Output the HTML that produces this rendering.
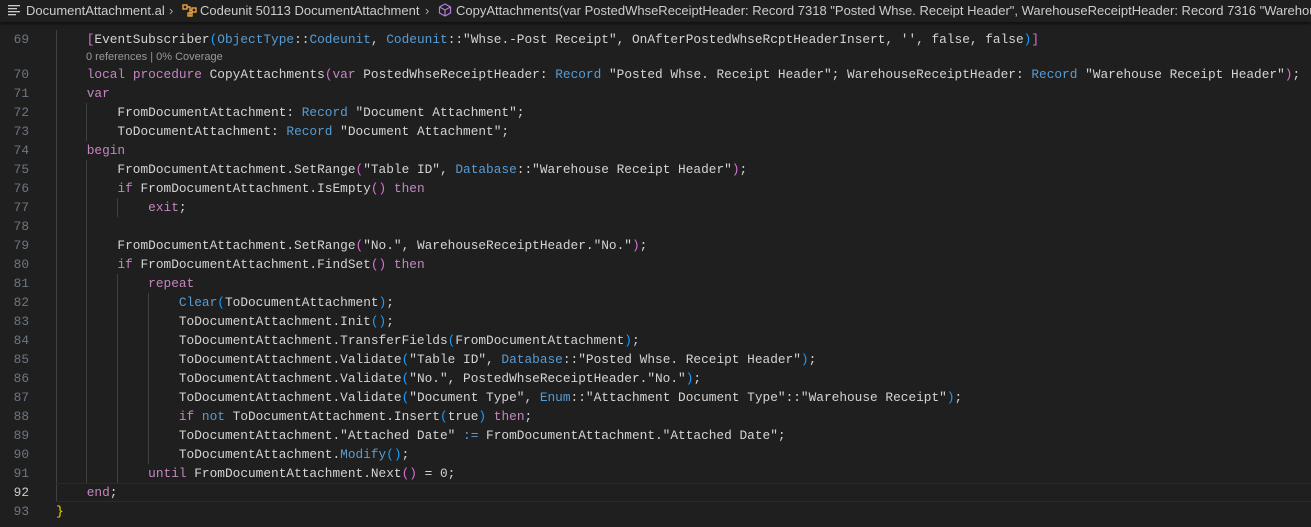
<!DOCTYPE html>
<html><head><meta charset="utf-8"><style>
html,body{margin:0;padding:0;background:#1f1f1f;width:1311px;height:527px;overflow:hidden;position:relative}
.bc{position:absolute;left:0;top:0;width:1311px;height:22px;background:#1f1f1f;font-family:"Liberation Sans",sans-serif;font-size:13px;color:#cccccc;white-space:nowrap;line-height:22px;box-shadow:0 2px 3px #0008;z-index:5;overflow:hidden}
.bc span{position:absolute;top:0}
.ln{position:absolute;left:0;width:29px;text-align:right;font-family:"Liberation Mono",monospace;font-size:12.8px;color:#6e7681;line-height:19px}
.cd{position:absolute;left:56px;font-family:"Liberation Mono",monospace;font-size:12.8px;color:#d4d4d4;white-space:pre;line-height:19px}
.k{color:#c586c0}.b{color:#569cd6}.p{color:#179fff}.g{color:#ffd700}.m{color:#da70d6}
.gd{position:absolute;width:1px;background:#404040}
.lens{position:absolute;left:86px;top:49px;font-family:"Liberation Sans",sans-serif;font-size:11px;color:#999;line-height:17px}
</style></head><body>
<div class="bc">
<span style="left:8px;top:0;color:#ccc">
<svg width="13" height="12" style="vertical-align:-1px"><g fill="#ccc"><rect x="0" y="1" width="12" height="1.3"/><rect x="0" y="4" width="9" height="1.3"/><rect x="0" y="7" width="12" height="1.3"/><rect x="0" y="10" width="8" height="1.3"/></g></svg></span>
<span style="left:26px">DocumentAttachment.al</span>
<span style="left:169px;color:#aaa">›</span>
<span style="left:182px;top:0"><svg width="16" height="14" style="vertical-align:-2px"><g stroke="#e8a33d" fill="none" stroke-width="1.4"><rect x="1" y="2" width="4" height="4"/><rect x="10" y="5" width="4" height="4"/><rect x="6" y="10" width="4" height="3"/><path d="M5 4h3v9M8 7h2"/></g></svg></span>
<span style="left:200px">Codeunit 50113 DocumentAttachment</span>
<span style="left:425px;color:#aaa">›</span>
<span style="left:438px;top:0"><svg width="14" height="14" style="vertical-align:-2px"><g stroke="#b180d7" fill="none" stroke-width="1.2"><path d="M7 1l5.5 3v6L7 13 1.5 10V4z M1.5 4L7 7l5.5-3M7 7v6"/></g></svg></span>
<span style="left:456px">CopyAttachments(var PostedWhseReceiptHeader: Record 7318 "Posted Whse. Receipt Header", WarehouseReceiptHeader: Record 7316 "Warehouse Receipt Header")</span>
</div>

<div class="gd" style="left:56px;top:30px;height:472px"></div>
<div class="gd" style="left:86px;top:103px;height:38px"></div>
<div class="gd" style="left:86px;top:160px;height:323px"></div>
<div class="gd" style="left:117px;top:198px;height:19px"></div>
<div class="gd" style="left:117px;top:274px;height:209px"></div>
<div class="gd" style="left:148px;top:293px;height:171px"></div>
<div style="position:absolute;left:56px;top:483px;width:1255px;height:17px;border-top:1px solid #2b2b2b;border-bottom:1px solid #2b2b2b"></div>

<div class="lens">0 references | 0% Coverage</div>

<div class="ln" style="top:30px">69</div>
<div class="ln" style="top:65px">70</div>
<div class="ln" style="top:84px">71</div>
<div class="ln" style="top:103px">72</div>
<div class="ln" style="top:122px">73</div>
<div class="ln" style="top:141px">74</div>
<div class="ln" style="top:160px">75</div>
<div class="ln" style="top:179px">76</div>
<div class="ln" style="top:198px">77</div>
<div class="ln" style="top:217px">78</div>
<div class="ln" style="top:236px">79</div>
<div class="ln" style="top:255px">80</div>
<div class="ln" style="top:274px">81</div>
<div class="ln" style="top:293px">82</div>
<div class="ln" style="top:312px">83</div>
<div class="ln" style="top:331px">84</div>
<div class="ln" style="top:350px">85</div>
<div class="ln" style="top:369px">86</div>
<div class="ln" style="top:388px">87</div>
<div class="ln" style="top:407px">88</div>
<div class="ln" style="top:426px">89</div>
<div class="ln" style="top:445px">90</div>
<div class="ln" style="top:464px">91</div>
<div class="ln" style="top:483px;color:#cccccc">92</div>
<div class="ln" style="top:502px">93</div>

<div class="cd" style="top:30px">    <span class="m">[</span>EventSubscriber<span class="p">(</span><span class="b">ObjectType</span>::<span class="b">Codeunit</span>, <span class="b">Codeunit</span>::"Whse.-Post Receipt", OnAfterPostedWhseRcptHeaderInsert, '', false, false<span class="p">)</span><span class="m">]</span></div>
<div class="cd" style="top:65px">    <span class="k">local</span> <span class="k">procedure</span> CopyAttachments<span class="m">(</span><span class="k">var</span> PostedWhseReceiptHeader: <span class="b">Record</span> "Posted Whse. Receipt Header"; WarehouseReceiptHeader: <span class="b">Record</span> "Warehouse Receipt Header"<span class="m">)</span>;</div>
<div class="cd" style="top:84px">    <span class="k">var</span></div>
<div class="cd" style="top:103px">        FromDocumentAttachment: <span class="b">Record</span> "Document Attachment";</div>
<div class="cd" style="top:122px">        ToDocumentAttachment: <span class="b">Record</span> "Document Attachment";</div>
<div class="cd" style="top:141px">    <span class="k">begin</span></div>
<div class="cd" style="top:160px">        FromDocumentAttachment.SetRange<span class="m">(</span>"Table ID", <span class="b">Database</span>::"Warehouse Receipt Header"<span class="m">)</span>;</div>
<div class="cd" style="top:179px">        <span class="k">if</span> FromDocumentAttachment.IsEmpty<span class="m">()</span> <span class="k">then</span></div>
<div class="cd" style="top:198px">            <span class="k">exit</span>;</div>
<div class="cd" style="top:236px">        FromDocumentAttachment.SetRange<span class="m">(</span>"No.", WarehouseReceiptHeader."No."<span class="m">)</span>;</div>
<div class="cd" style="top:255px">        <span class="k">if</span> FromDocumentAttachment.FindSet<span class="m">()</span> <span class="k">then</span></div>
<div class="cd" style="top:274px">            <span class="k">repeat</span></div>
<div class="cd" style="top:293px">                <span class="b">Clear</span><span class="p">(</span>ToDocumentAttachment<span class="p">)</span>;</div>
<div class="cd" style="top:312px">                ToDocumentAttachment.Init<span class="p">()</span>;</div>
<div class="cd" style="top:331px">                ToDocumentAttachment.TransferFields<span class="p">(</span>FromDocumentAttachment<span class="p">)</span>;</div>
<div class="cd" style="top:350px">                ToDocumentAttachment.Validate<span class="p">(</span>"Table ID", <span class="b">Database</span>::"Posted Whse. Receipt Header"<span class="p">)</span>;</div>
<div class="cd" style="top:369px">                ToDocumentAttachment.Validate<span class="p">(</span>"No.", PostedWhseReceiptHeader."No."<span class="p">)</span>;</div>
<div class="cd" style="top:388px">                ToDocumentAttachment.Validate<span class="p">(</span>"Document Type", <span class="b">Enum</span>::"Attachment Document Type"::"Warehouse Receipt"<span class="p">)</span>;</div>
<div class="cd" style="top:407px">                <span class="k">if</span> <span class="b">not</span> ToDocumentAttachment.Insert<span class="p">(</span>true<span class="p">)</span> <span class="k">then</span>;</div>
<div class="cd" style="top:426px">                ToDocumentAttachment."Attached Date" <span class="b">:=</span> FromDocumentAttachment."Attached Date";</div>
<div class="cd" style="top:445px">                ToDocumentAttachment.<span class="b">Modify</span><span class="p">()</span>;</div>
<div class="cd" style="top:464px">            <span class="k">until</span> FromDocumentAttachment.Next<span class="m">()</span> = 0;</div>
<div class="cd" style="top:483px">    <span class="k">end</span>;</div>
<div class="cd" style="top:502px"><span class="g">}</span></div>
</body></html>
